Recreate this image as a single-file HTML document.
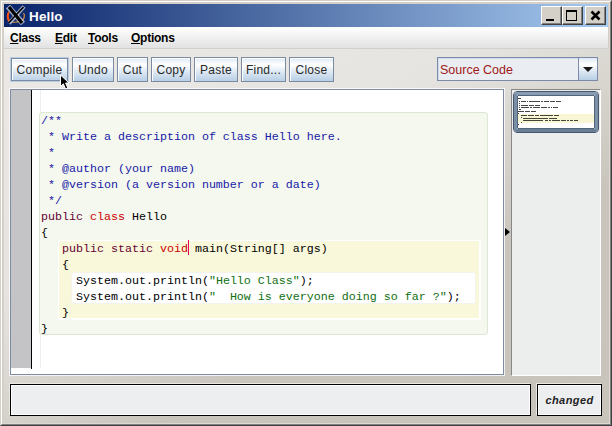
<!DOCTYPE html>
<html><head><meta charset="utf-8">
<style>
*{margin:0;padding:0;box-sizing:border-box}
html,body{width:612px;height:426px;overflow:hidden}
body{position:relative;background:#d4d0c8;font-family:"Liberation Sans",sans-serif;font-size:12px;color:#000}
.a{position:absolute}
#frame{left:0;top:0;width:612px;height:426px;border-top:1px solid #d4d0c8;border-left:1px solid #d4d0c8;border-right:1px solid #404040;border-bottom:1px solid #404040}
#frame2{left:1px;top:1px;width:610px;height:424px;border-top:1px solid #fff;border-left:1px solid #fff;border-right:1px solid #808080;border-bottom:1px solid #808080}
#title{left:4px;top:4px;width:604px;height:23px;background:linear-gradient(to right,#0a246a,#a6caf0)}
#title .t{left:25px;top:5px;color:#fff;font-weight:bold;font-size:13.5px;letter-spacing:.15px}
.wb{top:2px;width:21px;height:19px;background:#d4d0c8;border-top:1px solid #fff;border-left:1px solid #fff;border-right:1px solid #404040;border-bottom:1px solid #404040;box-shadow:inset -1px -1px 0 #808080}
#menubar{left:4px;top:27px;width:604px;height:22px;background:linear-gradient(#fff,#e2e2e2);border-bottom:1px solid #d0d0d0}
.mi{top:4px;font-weight:bold;font-size:12px;letter-spacing:-.25px}
.mi u{text-decoration:underline}
#toolbar{display:none}
.btn{top:57px;height:25px;border:1px solid #7a8aa0;letter-spacing:.25px;background:linear-gradient(#dde8f3 0%,#fff 30%,#dde8f3 60%,#b8cfe5 100%);box-shadow:inset 1px 1px 0 #fff;text-align:center;line-height:24px;font-size:12px;color:#2a2a2a}
#main{left:4px;top:49px;width:605px;height:374px;background:linear-gradient(152deg,#ebe9e5 0%,#e6e4e0 36%,#c9c5bd 66%,#c8c4bc 100%)}
#leftstrip{display:none}
#editor{left:10px;top:89px;width:494px;height:286px;background:#fff;border:1px solid #7f8ca4;box-shadow:0 0 0 1px rgba(255,255,255,.75)}
#gutter{left:11px;top:90px;width:20px;height:278px;background:#c4c4c6}
#gline{left:31px;top:90px;width:1px;height:279px;background:#000}
.code{font-family:"Liberation Mono",monospace;font-size:11.67px;line-height:16px;white-space:pre}
.cm{color:#1818a8}
.kw{color:#660033}
.kw2{color:#cc0000}
.st{color:#107010}
#outline{left:511px;top:89px;width:90px;height:287px;background:#eceeee;border-left:1px solid #888;border-top:1px solid #888;border-right:1px solid #fff;border-bottom:1px solid #fff}
#status{left:10px;top:384px;width:521px;height:32px;background:#eceef0;border:1px solid #000;box-shadow:inset 0 0 0 1px #fff,-1px -1px 0 #ebe9e4}
#changed{left:537px;top:384px;width:65px;height:32px;background:#eceef0;border:1px solid #000;box-shadow:inset 0 0 0 1px #fff,-1px -1px 0 #ebe9e4;font-weight:bold;font-style:italic;font-size:11px;text-align:center;line-height:30px;color:#222;letter-spacing:.4px}
</style></head><body>
<div class="a" id="frame"></div>
<div class="a" style="left:2px;top:423px;width:608px;height:1px;background:#dedad2"></div>
<div class="a" style="left:609px;top:2px;width:1px;height:422px;background:#dedad2"></div>
<div class="a" id="frame2"></div>
<div class="a" id="title">
  <svg class="a" style="left:2px;top:1px" width="20" height="20" viewBox="0 0 20 20">
    <path d="M3 7 Q0.5 11 3 16" stroke="#ff5010" stroke-width="2" fill="none"/>
    <path d="M17.5 8 Q19.5 11 17 15 Q12 18 6 17" stroke="#d09040" stroke-width="1.2" fill="none"/>
    <path d="M2 1.5 L17 18.5" stroke="#fff" stroke-width="5.5" opacity=".6"/>
    <path d="M18 1.5 L3 18.5" stroke="#fff" stroke-width="4" opacity=".6"/>
    <path d="M3 2 L16 18" stroke="#000" stroke-width="3.2"/>
    <path d="M17.5 2 L2.5 18" stroke="#000" stroke-width="1.6"/>
  </svg>
  <div class="a t">Hello</div>
  <div class="a wb" style="left:537px"><div class="a" style="left:4px;top:12px;width:8px;height:2px;background:#000"></div></div>
  <div class="a wb" style="left:558px"><div class="a" style="left:3px;top:3px;width:11px;height:11px;border:1px solid #000;border-top-width:2px"></div></div>
  <div class="a wb" style="left:581px">
    <svg class="a" style="left:4px;top:3px" width="12" height="11" viewBox="0 0 12 11"><path d="M1.5 1.5 L9.5 9.5 M9.5 1.5 L1.5 9.5" stroke="#000" stroke-width="2.5"/></svg>
  </div>
</div>
<div class="a" id="menubar">
  <div class="a mi" style="left:6px"><u>C</u>lass</div>
  <div class="a mi" style="left:51px"><u>E</u>dit</div>
  <div class="a mi" style="left:84px"><u>T</u>ools</div>
  <div class="a mi" style="left:127px"><u>O</u>ptions</div>
</div>
<div class="a" id="toolbar"></div>
<div class="a" id="main"></div>
<div class="a" id="leftstrip"></div>

<div class="a btn" style="left:10px;width:59px;border-color:#b8cce4"><div class="a" style="left:0;top:0;width:57px;height:23px;border:1px solid #7a8aa0;box-shadow:inset 1px 1px 0 #fff"></div><span class="a" style="left:0;top:0;width:57px;line-height:24px">Compile</span></div>
<div class="a btn" style="left:72px;width:42px">Undo</div>
<div class="a btn" style="left:117px;width:31px">Cut</div>
<div class="a btn" style="left:151px;width:40px">Copy</div>
<div class="a btn" style="left:194px;width:44px">Paste</div>
<div class="a btn" style="left:241px;width:45px">Find...</div>
<div class="a btn" style="left:289px;width:45px">Close</div>

<div class="a" style="left:437px;top:57px;width:161px;height:24px;border:1px solid #7a8aa8;background:#eaedf1;box-shadow:inset 1px 1px 0 #d0dcea">
  <div class="a" style="left:2px;top:5px;color:#a01818;font-size:12.5px">Source Code</div>
  <div class="a" style="left:140px;top:0;width:19px;height:22px;border-left:1px solid #7a8aa8;background:linear-gradient(#dde8f3 0%,#fff 30%,#dde8f3 60%,#b8cfe5 100%)">
    <div class="a" style="left:4px;top:9px;width:0;height:0;border-left:5.5px solid transparent;border-right:5.5px solid transparent;border-top:5.5px solid #1a1a1a"></div>
  </div>
</div>

<div class="a" id="editor"></div>
<div class="a" id="gutter"></div>
<div class="a" id="gline"></div>
<div class="a" style="left:40px;top:90px;width:1px;height:278px;background:#eeeeee"></div>
<div class="a" style="left:39px;top:112px;width:449px;height:223px;background:#f4f8ee;border:1px solid #dce8d4;border-radius:3px"></div>
<div class="a" style="left:58px;top:240px;width:423px;height:80px;background:#f9f8da;border:1px solid #fff;border-right-width:2px;border-bottom-width:2px;border-radius:3px"></div>
<div class="a" style="left:71px;top:272px;width:405px;height:32px;background:#fff;border:1px solid #f4f4ec;border-radius:3px"></div>
<div class="a code" style="left:41px;top:113px"><span class="cm">/**
 * Write a description of class Hello here.
 * 
 * @author (your name)
 * @version (a version number or a date)
 */</span>
<span class="kw">public</span> <span class="kw2">class</span> Hello
{
   <span class="kw">public static</span> <span class="kw2">void</span> main(String[] args)
   {
     System.out.println(<span class="st">"Hello Class"</span>);
     System.out.println(<span class="st">"  How is everyone doing so far ?"</span>);
   }
}</div>
<div class="a" style="left:188px;top:240px;width:1px;height:15px;background:#e8004a"></div>

<div class="a" style="left:505px;top:228px;width:0;height:0;border-top:4.5px solid transparent;border-bottom:4.5px solid transparent;border-left:5px solid #000"></div>

<div class="a" id="outline"></div>
<div class="a" style="left:513px;top:91px;width:86px;height:42px;background:#fff"></div>
<svg class="a" style="left:513px;top:91px" width="86" height="42" viewBox="0 0 86 42"><rect x="5" y="23" width="76" height="9" fill="#f8f6d4"/><g fill="#000" opacity=".72"><rect x="5" y="7" width="3" height="1"/><rect x="6" y="10" width="1" height="1"/><rect x="8" y="10" width="5" height="1"/><rect x="14" y="10" width="1" height="1"/><rect x="16" y="10" width="11" height="1"/><rect x="28" y="10" width="2" height="1"/><rect x="31" y="10" width="5" height="1"/><rect x="37" y="10" width="5" height="1"/><rect x="43" y="10" width="5" height="1"/><rect x="6" y="12" width="1" height="1"/><rect x="6" y="14" width="1" height="1"/><rect x="8" y="14" width="7" height="1"/><rect x="16" y="14" width="5" height="1"/><rect x="22" y="14" width="5" height="1"/><rect x="6" y="16" width="1" height="1"/><rect x="8" y="16" width="8" height="1"/><rect x="17" y="16" width="2" height="1"/><rect x="20" y="16" width="7" height="1"/><rect x="28" y="16" width="6" height="1"/><rect x="35" y="16" width="2" height="1"/><rect x="38" y="16" width="1" height="1"/><rect x="40" y="16" width="5" height="1"/><rect x="6" y="18" width="2" height="1"/><rect x="5" y="20" width="6" height="1"/><rect x="12" y="20" width="5" height="1"/><rect x="18" y="20" width="5" height="1"/><rect x="5" y="22" width="1" height="1"/><rect x="8" y="24" width="6" height="1"/><rect x="15" y="24" width="6" height="1"/><rect x="22" y="24" width="4" height="1"/><rect x="27" y="24" width="13" height="1"/><rect x="41" y="24" width="5" height="1"/><rect x="8" y="26" width="1" height="1"/><rect x="10" y="27" width="25" height="1"/><rect x="36" y="27" width="8" height="1"/><rect x="10" y="29" width="20" height="1"/><rect x="32" y="29" width="3" height="1"/><rect x="36" y="29" width="2" height="1"/><rect x="39" y="29" width="8" height="1"/><rect x="48" y="29" width="5" height="1"/><rect x="54" y="29" width="2" height="1"/><rect x="57" y="29" width="3" height="1"/><rect x="61" y="29" width="4" height="1"/><rect x="8" y="31" width="1" height="1"/><rect x="5" y="33" width="1" height="1"/></g></svg>
<div class="a" style="left:513px;top:91px;width:86px;height:42px;border:1px solid #46566c;border-radius:4px"><div class="a" style="left:0;top:0;width:84px;height:40px;border:3px solid #7c90a8;border-color:#8a9cb2 #7c90a8 #6a7e96 #7a8ea6;border-radius:3px"><div class="a" style="left:0;top:0;width:78px;height:34px;border:1px solid #52647c;border-radius:1px"></div></div></div>

<div class="a" id="status"></div>
<div class="a" id="changed">changed</div>

<svg class="a" style="left:58px;top:73px" width="14" height="19" viewBox="0 0 14 19"><path d="M2.5 2 L2.5 13.5 L5.3 10.8 L7.6 16 L9.8 15 L7.6 10 L11 10 Z" fill="#000" stroke="#fff" stroke-width="1"/></svg>
</body></html>
